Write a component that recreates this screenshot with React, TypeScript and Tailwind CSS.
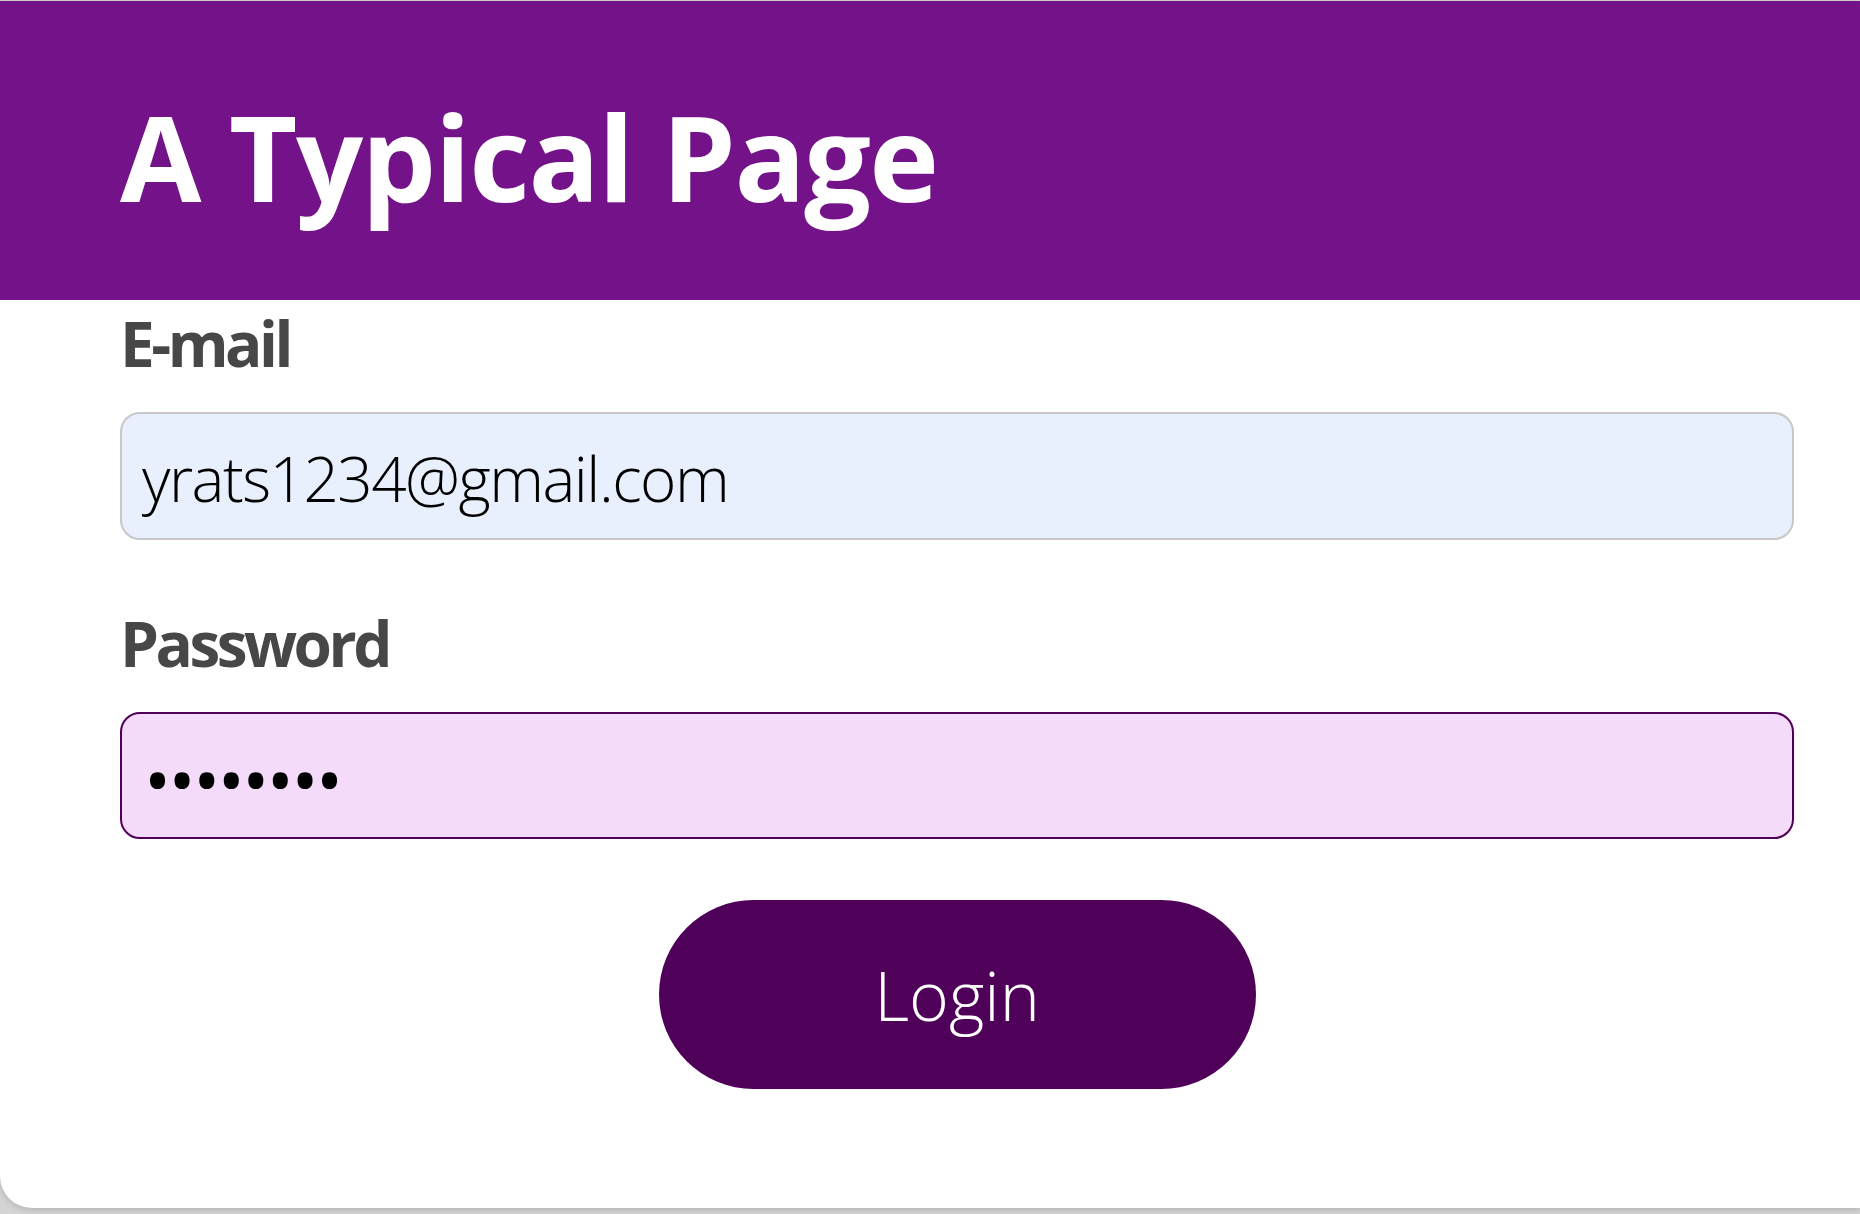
import React from "react";

const App: React.FC = () => {
  return (
    <div className="min-h-screen bg-[#d4d4d4] pt-px font-['Open_Sans',sans-serif]">
      <div className="h-[1207px] w-full bg-white rounded-bl-[32px] shadow-[0_2px_6px_rgba(0,0,0,0.15)] overflow-hidden">
        <header className="h-[299px] bg-[#74128a] pl-[120px] pt-[97px]">
          <h1 className="text-[118px] leading-none font-bold text-white tracking-[-1.5px]">A Typical Page</h1>
        </header>

        <form className="ml-[120px] mr-[66px] flex flex-col">
          <label htmlFor="email" className="mt-[12px] text-[62px] leading-none font-bold text-[#474747] tracking-[-3.5px]">
            E-mail
          </label>
          <input
            id="email"
            type="email"
            readOnly
            value="yrats1234@gmail.com"
            className="mt-[38px] h-[128px] w-full rounded-[20px] border-2 border-[#c8c8c8] bg-[#e8f0fe] pl-[20px] pt-[4px] text-[62px] font-light text-black outline-none tracking-[-1.5px]"
          />

          <label htmlFor="password" className="mt-[72px] text-[62px] leading-none font-bold text-[#474747] tracking-[-3.5px]">
            Password
          </label>
          <input
            id="password"
            type="password"
            readOnly
            value="password"
            className="mt-[38px] h-[127px] w-full rounded-[20px] border-2 border-[#4f0058] bg-[#f5dbfa] pl-[22px] pt-[7px] text-[72px] text-black outline-none tracking-[-2.5px]"
          />

          <button
            type="button"
            className="mx-auto mt-[61px] h-[189px] w-[597px] rounded-full bg-[#4f0058] text-[68px] font-light text-white"
          >
            Login
          </button>
        </form>
      </div>
    </div>
  );
};

export default App;
